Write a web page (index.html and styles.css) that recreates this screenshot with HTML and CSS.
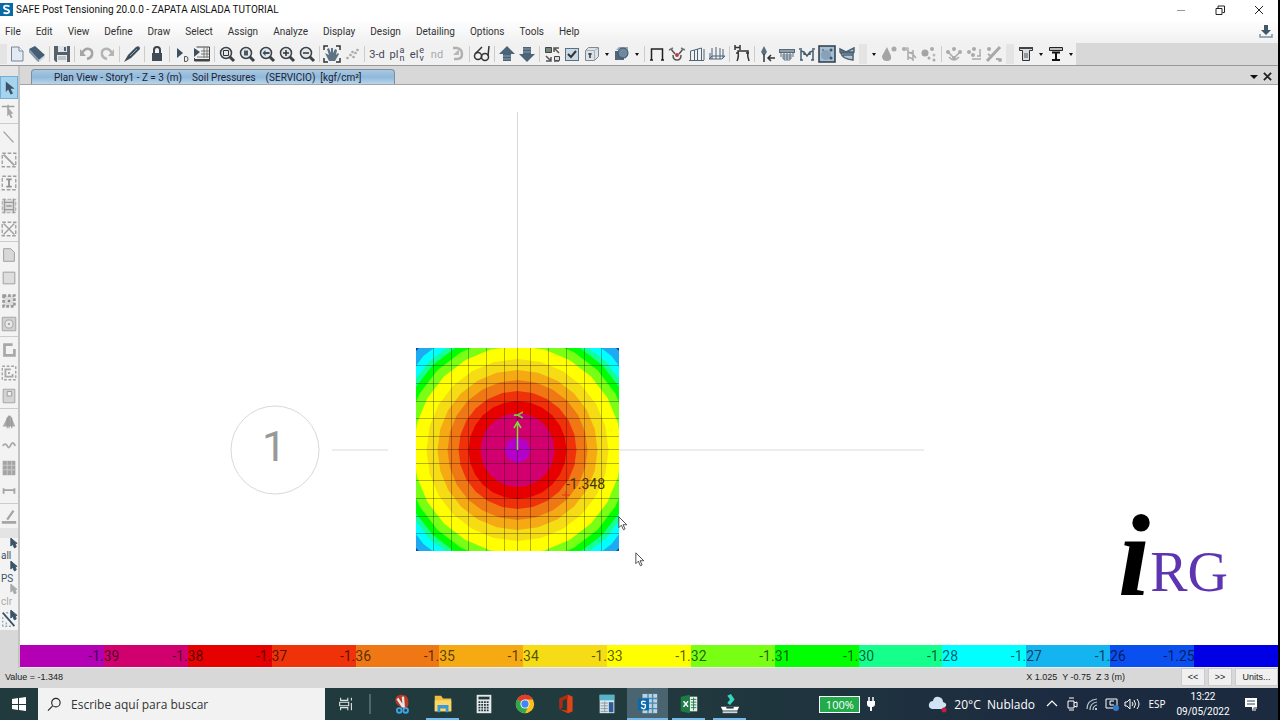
FILE: index.html
```html
<!DOCTYPE html>
<html lang="es">
<head>
    <meta charset="UTF-8">
    <meta name="viewport" content="width=device-width, initial-scale=1.0">
    <title>SAFE Post Tensioning 20.0.0 - ZAPATA AISLADA TUTORIAL</title>
    <link rel="stylesheet" href="styles.css">
</head>
<body>

    <svg class="defs" aria-hidden="true">
        <symbol id="lens" viewBox="0 0 20 20">
            <circle cx="9" cy="9" r="5.500" fill="#e4e8eb" stroke="#3a4248" stroke-width="1.500"/>
            <path d="M12.500 12.500l4.500 4.500" stroke="#3a4248" stroke-width="3"/>
        </symbol>
        <symbol id="pointer" viewBox="0 0 12 18">
            <path d="M1 1v13l3-3 2.500 5.500 2-1-2.500-5h4.500z" fill="#fff" stroke="#333" stroke-width="1"/>
        </symbol>
        <symbol id="corner-arrow" viewBox="0 0 20 20">
            <path d="M12 0v9l2-2 2 4 2-1-1-4h2z" fill="currentColor" stroke="currentColor"/>
        </symbol>
    </svg>

    <header class="titlebar">
        <svg class="app-logo" viewBox="0 0 13 13"><rect width="13" height="13" fill="#0a6aa8"/><path d="M9.500 3.500Q6.500 1.800 4.300 3.300Q3 5.500 6.500 6.300Q10.300 7.300 8.800 9.500Q6.500 11 3.500 9.500" fill="none" stroke="#fff" stroke-width="1.800"/></svg>
        <h1>SAFE Post Tensioning 20.0.0 - ZAPATA AISLADA TUTORIAL</h1>
        <div class="window-buttons">
            <button aria-label="Minimize"><svg viewBox="0 0 12 12"><path d="M2 6.500h8" stroke="#999"/></svg></button>
            <button aria-label="Restore"><svg viewBox="0 0 12 12"><path d="M2 4.500h6v6h-6zM4 4.500v-2.500h6.500v6.500h-2" fill="none" stroke="#222"/></svg></button>
            <button aria-label="Close"><svg viewBox="0 0 12 12"><path d="M2 2l8 8M10 2l-8 8" stroke="#222"/></svg></button>
        </div>
    </header>

    <nav class="menubar">
        <button>File</button>
        <button>Edit</button>
        <button>View</button>
        <button>Define</button>
        <button>Draw</button>
        <button>Select</button>
        <button>Assign</button>
        <button>Analyze</button>
        <button>Display</button>
        <button>Design</button>
        <button>Detailing</button>
        <button>Options</button>
        <button>Tools</button>
        <button>Help</button>
        <button class="download" aria-label="Download"><svg viewBox="0 0 14 16"><path d="M5 2h4v5h3l-5 5-5-5h3z" fill="#3f586b"/><path d="M1 11v3h12v-3" fill="none" stroke="#7a93a5" stroke-width="1.500"/></svg></button>
    </nav>

    <div class="toolbar">
        <div class="tools">
            <i class="grip"></i>
            <button aria-label="New"><svg viewBox="0 0 20 20"><path d="M4.500 3h7.500l4 4v10h-11.500z" fill="#e4eaf2" stroke="#76869a"/><path d="M12 3v4h4" fill="#fff" stroke="#76869a"/></svg></button>
            <button aria-label="Open"><svg viewBox="0 0 20 20"><path d="M2 5l6-3 10 9-6 5z" fill="#465e74"/><path d="M2 5l10 11v2l-2-1-8-9z" fill="#7f95a8"/><path d="M12 16l6-5v2l-6 5z" fill="#c9d3dc"/></svg></button>
            <i class="sep"></i>
            <button aria-label="Save"><svg viewBox="0 0 20 20"><path d="M2 2h16v16h-14l-2-2z" fill="#556069"/><path d="M6 2h9v6h-9z" fill="#dfe5ea"/><path d="M12 3h2v4h-2z" fill="#556069"/><path d="M5 11h10v7h-10z" fill="#e8ecf0"/><path d="M6 13h8M6 15h8" stroke="#909aa2"/></svg></button>
            <i class="sep"></i>
            <button aria-label="Undo"><svg viewBox="0 0 20 20"><path d="M5 9q3-5 7-4t3 6q-1 3-5 4" fill="none" stroke="#a4a4a4" stroke-width="2.500"/><path d="M3 5v7h6z" fill="#a4a4a4"/></svg></button>
            <button aria-label="Redo"><svg viewBox="0 0 20 20"><path d="M15 9q-3-5-7-4t-3 6q1 3 5 4" fill="none" stroke="#b4b4b4" stroke-width="2.500"/><path d="M17 5v7h-6z" fill="#b4b4b4"/></svg></button>
            <i class="sep"></i>
            <button aria-label="Edit"><svg viewBox="0 0 20 20"><path d="M2 18l4-7 8-8q4-2 4 2l-9 9z" fill="#3c4c58"/><path d="M8 12l7-7" stroke="#91a5b3"/></svg></button>
            <i class="sep"></i>
            <button aria-label="Lock"><svg viewBox="0 0 20 20"><path d="M7 9v-3q0-3 3-3t3 3v3" fill="none" stroke="#3c4348" stroke-width="2"/><rect x="5" y="9" width="10" height="8" fill="#3f4c57"/></svg></button>
            <i class="sep"></i>
            <button aria-label="Run detailing"><svg viewBox="0 0 20 20"><path d="M5 4l6 5-6 5z" fill="#3c5060"/><path d="M12.500 12.500v5h1.500q2 0 2-2.500t-2-2.500z" fill="none" stroke="#555"/></svg></button>
            <button aria-label="Run analysis"><svg viewBox="0 0 20 20"><path d="M4.500 3h13v14h-15v-3" fill="none" stroke="#444"/><path d="M9 7h8M9 10h8M5 13h12M12 3v11M15 3v11" stroke="#777"/><path d="M2 4l6 4-6 5z" fill="#3c5060"/><path d="M3 15h14v2h-14z" fill="#444"/></svg></button>
            <i class="sep"></i>
            <button aria-label="Zoom window"><svg viewBox="0 0 20 20"><use href="#lens"/><path d="M6.500 6.500h5v5h-5z" fill="none" stroke="#333"/></svg></button>
            <button aria-label="Zoom full"><svg viewBox="0 0 20 20"><use href="#lens"/><path d="M7 6.500h4v5h-4z" fill="#4a5862"/></svg></button>
            <button aria-label="Zoom previous"><svg viewBox="0 0 20 20"><use href="#lens"/><path d="M5.500 9l3-3v2h4v2h-4v2z" fill="#3a5060"/></svg></button>
            <button aria-label="Zoom in"><svg viewBox="0 0 20 20"><use href="#lens"/><path d="M6 9h6M9 6v6" stroke="#333" stroke-width="1.500"/></svg></button>
            <button aria-label="Zoom out"><svg viewBox="0 0 20 20"><use href="#lens"/><path d="M6 9h6" stroke="#333" stroke-width="1.500"/></svg></button>
            <i class="sep"></i>
            <button aria-label="Pan"><svg viewBox="0 0 20 20"><path d="M2 6v-4h4M14 2h4v4M18 14v4h-4M6 18h-4v-4" fill="none" stroke="#333" stroke-width="1.500"/><path d="M3 9l4 2-2-6 2-1 2 5 0-5h2l0 5 2-4 2 1-1 5 2-2 1 1-4 7h-6z" fill="#5d7384"/></svg></button>
            <button aria-label="Walk"><svg viewBox="0 0 20 20"><path d="M5 15l1-2M8 12l1-2M11 14l1-2M13 10l1-2M15 7l1-2M10 9l1-2" stroke="#aaa" stroke-width="2.500"/></svg></button>
            <i class="sep"></i>
            <button class="word">3-d</button>
            <button class="word stacked">pl<span>a<br>n</span></button>
            <button class="word stacked">el<span>e<br>v</span></button>
            <button class="word off">nd</button>
            <button aria-label="Rotate"><svg viewBox="0 0 20 20"><path d="M6 4h4q5 1 5 6t-5 5h-3" fill="none" stroke="#b0b0b0" stroke-width="2.500"/><path d="M12 5v6h-6z" fill="#b8b8b8"/></svg></button>
            <i class="sep"></i>
            <button aria-label="Object visibility"><svg viewBox="0 0 20 20"><circle cx="6" cy="12" r="3.500" fill="none" stroke="#333" stroke-width="1.500"/><circle cx="13" cy="13" r="3.500" fill="none" stroke="#333" stroke-width="1.500"/><path d="M3 10l7-7M16 12l1-10M9 12h1" fill="none" stroke="#333" stroke-width="1.500"/></svg></button>
            <i class="sep"></i>
            <button aria-label="Story up"><svg viewBox="0 0 20 20"><path d="M10 2l8 8h-4v7h-8v-7h-4z" fill="#4c6478"/><path d="M6 12h8M6 15h8" stroke="#8aa0b2"/></svg></button>
            <button aria-label="Story down"><svg viewBox="0 0 20 20"><path d="M10 18l8-8h-4v-7h-8v7h-4z" fill="#4c6478"/><path d="M6 5h8M6 8h8" stroke="#8aa0b2"/></svg></button>
            <i class="sep"></i>
            <button aria-label="Shrink objects"><svg viewBox="0 0 20 20"><path d="M3.500 3.500h6v5h-6z" fill="#708878" stroke="#444"/><path d="M12.500 12.500h5v4h-5z" fill="#ddd" stroke="#444"/><path d="M17 9l-4-4M12 8v-4h5M4 12l4 4M9 13v4h-5M12 17h5" fill="none" stroke="#555" stroke-width="1.500"/></svg></button>
            <button aria-label="Display options"><svg viewBox="0 0 20 20"><rect x="3.500" y="4.500" width="13" height="12" fill="#c8d8e4" stroke="#5a7080"/><path d="M6 10l3 3 5-6" fill="none" stroke="#333" stroke-width="2"/></svg></button>
            <button aria-label="Assignments"><svg viewBox="0 0 20 20"><path d="M3.500 6.500l3-3h10v9l-4 4h-9z" fill="#dce3e8" stroke="#7c8a94"/><path d="M3.500 6.500h9v10M12.500 6.500l4-3" fill="none" stroke="#a4b0b8"/><path d="M8 9v5" stroke="#333" stroke-width="1.500"/><path d="M6 10h4" stroke="#333"/></svg></button>
            <button class="caret" aria-label="More assignments"></button>
            <button aria-label="Extrude"><svg viewBox="0 0 20 20"><path d="M3 7h9v9h-9z" fill="#50687c"/><path d="M7 3h9v9l-3 3v-9h-9z" fill="#90a5b8"/><circle cx="11" cy="9" r="5" fill="#6f889e" stroke="#405468"/></svg></button>
            <button class="caret" aria-label="More extrusions"></button>
            <i class="sep"></i>
            <button aria-label="Undeformed shape"><svg viewBox="0 0 20 20"><path d="M3 16h3M4.500 16v-11h11v11M14 16h3" fill="none" stroke="#222" stroke-width="1.500"/></svg></button>
            <button aria-label="Loads"><svg viewBox="0 0 20 20"><path d="M4 5l4 5M16 5l-4 5M6 11q0 5 4 5t4-5" fill="none" stroke="#555" stroke-width="1.500"/><path d="M2 6l4-2M18 6l-4-2" stroke="#777" stroke-width="1.500"/><circle cx="10" cy="11" r="2" fill="#c23a4a"/></svg></button>
            <button aria-label="Frame loads"><svg viewBox="0 0 20 20"><path d="M3.500 16v-9l4-1v10M7.500 6l7-2v12M10.500 5v11M2 16.500h15M17 16v-11" fill="none" stroke="#4e6678"/></svg></button>
            <button aria-label="Area loads"><svg viewBox="0 0 20 20"><path d="M5 4v11M9 3v12M13 4v11M3 9v6M16 5v9M2 15h13l3-3h-13z" fill="none" stroke="#4b6376"/></svg></button>
            <i class="sep"></i>
            <button aria-label="Deformed shape"><svg viewBox="0 0 20 20"><path d="M3 1v5M8 1v5M3 3.500h5M5 17q2-4 1-10h10q-1 5 1 10M4 9h3M14 9h3" fill="none" stroke="#333" stroke-width="1.500"/></svg></button>
            <i class="sep"></i>
            <button aria-label="Reactions"><svg viewBox="0 0 20 20"><path d="M7 2l3 6-2 3h-2l-2-3z" fill="#5a7080"/><path d="M7 10v8M11 14h7M14 11l-3 3 3 3" fill="none" stroke="#333" stroke-width="1.500"/></svg></button>
            <button aria-label="Slab forces"><svg viewBox="0 0 20 20"><path d="M2 5h16v4h-16z" fill="#566a78"/><path d="M5 10h10v5h-2v2h-6v-2h-2z" fill="#a9b8c4"/><path d="M4 9v4M7 9v7M10 9v7M13 9v7M16 9v4" stroke="#566a78"/><path d="M3 7h14" stroke="#c6d0d8"/></svg></button>
            <button aria-label="Beam forces"><svg viewBox="0 0 20 20"><path d="M4 16v-10M16 16v-10M4 7l3 1 3 4 3-4 3-1M2 5h3M15 5h3M3 16h3M14 16h3M7 8v3M13 8v3" fill="none" stroke="#465f70" stroke-width="1.500"/></svg></button>
            <button class="pressed" aria-label="Soil pressures"><svg viewBox="0 0 20 20"><rect x="2" y="2" width="16" height="16" fill="#a3bdd2" stroke="#2d3d4a" stroke-width="1.500"/><circle cx="9" cy="11" r="5" fill="#87a2b8"/><circle cx="14" cy="6" r="1.500" fill="#456"/><circle cx="6" cy="6" r="1" fill="#678"/><circle cx="14" cy="14" r="1.500" fill="#456"/></svg></button>
            <button aria-label="Strip forces"><svg viewBox="0 0 20 20"><path d="M3 5l6 3 8-4v4h-14zM3 9h14M4 9q1 6 12 7v-7M6 11h10" fill="#b8c6d0" stroke="#4b6374" stroke-width="1.500"/></svg></button>
            <i class="grip light"></i>
            <button class="caret" aria-label="More results"></button>
            <button aria-label="Load case"><svg viewBox="0 0 20 20"><path d="M8 3l4 9q1 5-4 5t-5-5z" fill="#a4a4a4"/><circle cx="15" cy="5" r="2.500" fill="#aaa"/></svg></button>
            <button aria-label="Tendon points"><svg viewBox="0 0 20 20"><path d="M9 6v10M14 6v11M9 8l5 2M9 13l5 2M12 8l5 6" stroke="#aaa" stroke-width="1.500"/><circle cx="5" cy="5" r="2" fill="#aaa"/><circle cx="8" cy="5" r="2" fill="#bbb"/></svg></button>
            <button aria-label="Joints"><svg viewBox="0 0 20 20"><circle cx="6" cy="9" r="3.500" fill="#a4a4a4"/><circle cx="13" cy="5" r="2" fill="#aaa"/><circle cx="10" cy="14" r="1.500" fill="#aaa"/><circle cx="15" cy="16" r="1.500" fill="#aaa"/><circle cx="15" cy="11" r="1.500" fill="#bbb"/></svg></button>
            <i class="sep"></i>
            <button aria-label="Links"><svg viewBox="0 0 20 20"><path d="M4 8l6 6 6-6M5 13q5 6 10 0" fill="none" stroke="#aaa" stroke-width="1.500"/><circle cx="10" cy="5" r="2" fill="#aaa"/><circle cx="4" cy="8" r="2" fill="#aaa"/><circle cx="16" cy="8" r="2" fill="#aaa"/><circle cx="10" cy="14" r="2" fill="#aaa"/></svg></button>
            <button aria-label="Supports"><svg viewBox="0 0 20 20"><path d="M8 15h9M16 5v7M13 12h4" stroke="#aaa" stroke-width="1.500"/><circle cx="5" cy="8" r="2" fill="#aaa"/><circle cx="10" cy="5" r="2" fill="#aaa"/><circle cx="9" cy="11" r="2" fill="#aaa"/></svg></button>
            <button aria-label="Cut"><svg viewBox="0 0 20 20"><path d="M3 17l13-14" stroke="#a8a8a8" stroke-width="3"/><path d="M4 10l3 2M12 15h3" stroke="#aaa" stroke-width="2"/><circle cx="5" cy="5" r="2" fill="#aaa"/><circle cx="16" cy="16" r="2" fill="#aaa"/></svg></button>
            <i class="grip light"></i>
            <button aria-label="Concrete design"><svg viewBox="0 0 20 20"><path d="M3.500 3.500h13v3h-3v10h-7v-10h-3z" fill="#d6dde2" stroke="#333"/><path d="M3 4h14" stroke="#444" stroke-width="2"/><path d="M9 9v5M11 9v5" stroke="#555"/></svg></button>
            <button class="caret" aria-label="More concrete design"></button>
            <button aria-label="Steel design"><svg viewBox="0 0 20 20"><path d="M3.500 3.500h13v3h-13z" fill="#bbb" stroke="#222"/><path d="M6 8.500h8M10 8v8M6 16h8" stroke="#111" stroke-width="2"/></svg></button>
            <button class="caret" aria-label="More steel design"></button>
        </div>
    </div>

    <div class="workspace">
        <aside class="side-tools">
            <i class="grip-line"></i>
            <button class="active" aria-label="Select"><svg viewBox="0 0 20 20"><path d="M6 2v13l3-3 3 6 3-1-3-6h5z" fill="#3a5368"/></svg></button>
            <button aria-label="Reshape"><svg viewBox="0 0 20 20"><path d="M2 5h14M9 3v5" stroke="#a0a0a0" stroke-width="1.500"/><path d="M8 5v11l2-2 2 4 2-1-2-4h3z" fill="#a8a8a8"/></svg></button>
            <i class="line"></i>
            <button aria-label="Draw line"><svg viewBox="0 0 20 20"><path d="M4 4l11 12" stroke="#a0a0a0" stroke-width="1.500"/></svg></button>
            <button aria-label="Quick line"><svg viewBox="0 0 20 20"><path d="M2.500 2.500h15v15h-15z" fill="none" stroke="#a0a0a0" stroke-width="1.500" stroke-dasharray="4 2"/><path d="M4 4l12 12" stroke="#a0a0a0" stroke-width="2"/></svg></button>
            <button aria-label="Quick column"><svg viewBox="0 0 20 20"><path d="M2.500 2.500h15v15h-15z" fill="none" stroke="#a0a0a0" stroke-width="1.500" stroke-dasharray="4 2"/><path d="M7 6h6M10 6v8M7 14h6" stroke="#909090" stroke-width="2"/></svg></button>
            <button aria-label="Secondary beams"><svg viewBox="0 0 20 20"><path d="M2.500 2.500h15v15h-15z" fill="#ddd" stroke="#a0a0a0" stroke-dasharray="4 2"/><path d="M5 2v16M15 2v16M5 6h10M5 14h10M7 10h6" fill="none" stroke="#999" stroke-width="1.500"/></svg></button>
            <button aria-label="Braces"><svg viewBox="0 0 20 20"><path d="M2.500 2.500h15v15h-15z" fill="none" stroke="#a0a0a0" stroke-width="1.500" stroke-dasharray="4 2"/><path d="M4 4l12 12M16 4l-12 12" stroke="#a0a0a0" stroke-width="1.500"/></svg></button>
            <i class="line"></i>
            <button aria-label="Draw slab"><svg viewBox="0 0 20 20"><path d="M4 3h8l4 4v10h-12z" fill="#d8d8d8" stroke="#999"/></svg></button>
            <button aria-label="Rectangular slab"><svg viewBox="0 0 20 20"><path d="M3.500 3.500h13v13h-13z" fill="#dedede" stroke="#999"/></svg></button>
            <button aria-label="Quick slab"><svg viewBox="0 0 20 20"><path d="M4 4h12v12h-12z" fill="#ddd" stroke="#999" stroke-width="3" stroke-dasharray="3 2"/><circle cx="10" cy="10" r="1.500" fill="#888"/></svg></button>
            <button aria-label="Slab opening"><svg viewBox="0 0 20 20"><path d="M2.500 2.500h15v15h-15z" fill="#d0d0d0" stroke="#a0a0a0"/><circle cx="10" cy="10" r="4.500" fill="#e8e8e8" stroke="#a0a0a0"/><circle cx="10" cy="10" r="1" fill="#888"/></svg></button>
            <i class="line"></i>
            <button aria-label="Draw wall"><svg viewBox="0 0 20 20"><path d="M14 4h-9v12h11v-7" fill="none" stroke="#a8a8a8" stroke-width="3"/></svg></button>
            <button aria-label="Quick wall"><svg viewBox="0 0 20 20"><path d="M2.500 2.500h15v15h-15z" fill="none" stroke="#a0a0a0" stroke-width="1.500" stroke-dasharray="3 2"/><path d="M12 6h-6v8h8v-3" fill="none" stroke="#a8a8a8" stroke-width="2"/><circle cx="10" cy="10" r="1" fill="#888"/></svg></button>
            <button aria-label="Wall opening"><svg viewBox="0 0 20 20"><path d="M3.500 2.500h13v15h-13z" fill="#d4d4d4" stroke="#a0a0a0"/><path d="M8 5h5v5h-5z" fill="#eee" stroke="#999"/></svg></button>
            <i class="line"></i>
            <button aria-label="Load"><svg viewBox="0 0 20 20"><path d="M9 3h3l5 12h-14z" fill="#aaa"/><path d="M8 5v12M13 5v12M10 3v14" stroke="#8e8e8e"/></svg></button>
            <button aria-label="Tendon"><svg viewBox="0 0 20 20"><path d="M3 11q3-4 5 0t4-1 5 1" fill="none" stroke="#a8a8a8" stroke-width="2"/></svg></button>
            <button aria-label="Grid"><svg viewBox="0 0 20 20"><rect x="3" y="2" width="14" height="16" fill="#a4a4a4"/><path d="M8 2v16M13 2v16M3 7h14M3 12h14" stroke="#ccc"/></svg></button>
            <button aria-label="Dimension"><svg viewBox="0 0 20 20"><path d="M3 9h14M4 7v6M16 7v6" stroke="#a4a4a4" stroke-width="2"/></svg></button>
            <i class="line"></i>
            <button aria-label="Design strip"><svg viewBox="0 0 20 20"><path d="M8 13l7-10" stroke="#a4a4a4" stroke-width="2.500"/><path d="M2 16h16" stroke="#a4a4a4" stroke-width="3"/></svg></button>
            <i class="grip-line"></i>
            <button class="word">all<svg viewBox="0 0 20 20"><use href="#corner-arrow"/></svg></button>
            <button class="word">PS<svg viewBox="0 0 20 20"><use href="#corner-arrow"/></svg></button>
            <button class="word off">clr<svg viewBox="0 0 20 20"><use href="#corner-arrow"/></svg></button>
            <button class="by-line" aria-label="Select by line"><svg viewBox="0 0 20 20"><path d="M3 3l13 15" stroke="#3a5368" stroke-width="2"/><path d="M3 8v10M7 14v4M12 18h-9M7 3h5" fill="none" stroke="#8aa4b6" stroke-width="1.500" stroke-dasharray="2 2"/><use href="#corner-arrow"/></svg></button>
        </aside>

        <main class="view">
            <div class="tabs">
                <button class="tab"><span>Plan View - Story1 - Z = 3 (m)</span><span>Soil Pressures</span><span>(SERVICIO)&nbsp; [kgf/cm²]</span></button>
                <div class="tab-controls">
                    <button class="caret" aria-label="Tab list"></button>
                    <button aria-label="Close tab"><svg viewBox="0 0 10 10"><path d="M1 1l8 8M9 1l-8 8" stroke="#222" stroke-width="2"/></svg></button>
                </div>
            </div>

            <div class="canvas">
                <!-- plan view, in window units -->
                <svg class="plan" viewBox="20 85 1258 560" preserveAspectRatio="xMinYMin meet">
                    <g stroke="#d9d9d9" fill="none">
                        <path d="M517.500 112v236M332 450h56M619 450h305"/>
                        <circle cx="275" cy="450" r="44"/>
                    </g>
                    <text class="axis" x="274" y="461">1</text>

                    <clipPath id="slab"><rect x="416" y="348" width="203" height="203"/></clipPath>
                    <g id="contours" clip-path="url(#slab)">
                        <rect x="416" y="348" width="203" height="203" fill="#1eaaf0"/>
                    </g>
                    <path d="M416 348h3l-3 3zM619 348h-3l3 3zM416 551v-3l3 3zM619 551v-3l-3 3z" fill="#1440b4"/>
                    <path class="mesh" d="M433.500 348v203M451.500 348v203M468.500 348v203M486.500 348v203M504.500 348v203M517.500 348v203M530.500 348v203M548.500 348v203M566.500 348v203M584.500 348v203M601.500 348v203M416 365.500h203M416 383.500h203M416 401.500h203M416 418.500h203M416 436.500h203M416 449.500h203M416 463.500h203M416 480.500h203M416 498.500h203M416 516.500h203M416 533.500h203"/>
                    <path d="M517.500 450v-27M514 428l3.500-6 3.500 6" fill="none" stroke="#7bdc3c" stroke-width="1.500"/>
                    <text class="y-axis" transform="translate(514 415) rotate(90)">Y</text>
                    <path d="M562 495h8M566 491v7" stroke="#e6321e"/>
                    <text class="value" x="566" y="489">-1.348</text>
                    <use href="#pointer" x="618" y="516" width="10" height="15"/>
                    <use href="#pointer" x="635" y="552" width="10" height="15"/>
                </svg>
                <div class="brand"><span class="brand-i">i</span><span class="brand-rg">RG</span></div>
            </div>

            <div class="legend">
                <span>-1.39</span>
                <span>-1.38</span>
                <span>-1.37</span>
                <span>-1.36</span>
                <span>-1.35</span>
                <span>-1.34</span>
                <span>-1.33</span>
                <span>-1.32</span>
                <span>-1.31</span>
                <span>-1.30</span>
                <span>-1.28</span>
                <span>-1.27</span>
                <span>-1.26</span>
                <span>-1.25</span>
            </div>
        </main>
    </div>

    <footer class="statusbar">
        <span>Value = -1.348</span>
        <span class="coords">X 1.025&nbsp; Y -0.75&nbsp; Z 3 (m)</span>
        <button>&lt;&lt;</button>
        <button>&gt;&gt;</button>
        <button class="units">Units...</button>
    </footer>

    <div class="taskbar">
        <button class="start" aria-label="Start"><svg viewBox="0 0 14 14"><path d="M0 2l6-1v6h-6zM7 1l7-1v7h-7zM0 8h6v5l-6-1zM7 8h7v6l-7-1z" fill="#fff"/></svg></button>
        <label class="search">
            <svg viewBox="0 0 16 16"><circle cx="9.500" cy="6" r="4.500" fill="none" stroke="#222" stroke-width="1.200"/><path d="M6 9.500l-5 5" stroke="#222" stroke-width="1.200"/></svg>
            <input type="text" placeholder="Escribe aquí para buscar" aria-label="Buscar">
        </label>
        <div class="apps">
            <button class="task-view" aria-label="Task view"><svg viewBox="0 0 20 20"><path d="M4 3v3h8v-3M4 17v-3h8v3M3 8h10v4h-10zM16 3v3M16 9v8" fill="none" stroke="#dfe6e8" stroke-width="1.200"/></svg></button>
            <i class="divider"></i>
            <button aria-label="Snip"><svg viewBox="0 0 24 24"><path d="M10 2q9-1 9 8 0 8-5 8l-8-6q-4-8 4-10z" fill="#b93a24"/><path d="M13 4l1 12M7 6l6 9" stroke="#e6e9ec" stroke-width="2.500"/><circle cx="9" cy="19" r="2.500" fill="none" stroke="#3ba6e8" stroke-width="2"/><circle cx="16" cy="19" r="2.500" fill="none" stroke="#3ba6e8" stroke-width="2"/></svg></button>
            <button class="open" aria-label="Explorer"><svg viewBox="0 0 24 24"><path d="M3 3h7l2 3h9v14h-18z" fill="#f0bd3c"/><path d="M3 8h18v12h-18z" fill="#fbd968"/><path d="M6 21v-8h12v8h-3v-4h-6v4z" fill="#3d98d8"/></svg></button>
            <button aria-label="Calculator"><svg viewBox="0 0 24 24"><rect x="4" y="2" width="16" height="20" fill="#e6e9ea"/><path d="M6 4h12v3h-12z" fill="#213a3e"/><path d="M6 10h12M6 13h12M6 16h12M6 19h12" stroke="#213a3e" stroke-width="2" stroke-dasharray="2 1"/></svg></button>
            <button aria-label="Chrome"><svg viewBox="0 0 24 24"><circle cx="12" cy="12" r="10" fill="#fbc116"/><path d="M12 12L3.300 7A10 10 0 0 1 20.700 7H12z" fill="#e33b2e"/><path d="M12 12L3.300 7A10 10 0 0 0 12 22L16 14z" fill="#2da94f"/><circle cx="12" cy="12" r="5" fill="#fff"/><circle cx="12" cy="12" r="4" fill="#4285f4"/></svg></button>
            <button aria-label="Office"><svg viewBox="0 0 24 24"><path d="M5 6l9-4 5 2v16l-5 2-9-4 8 1v-13l-5 2v7l-3 2z" fill="#d83b01"/><path d="M14 2l5 2v16l-5 2z" fill="#e0441c"/><path d="M5 6l9-4v4l-6 2v8l-3 2z" fill="#b02a12"/></svg></button>
            <button aria-label="Calculator plus"><svg viewBox="0 0 24 24"><rect x="4" y="2" width="16" height="20" fill="#dbe6ec"/><rect x="4" y="2" width="16" height="6" fill="#52b5cc"/><path d="M5 11h8M5 14h8M5 17h8M5 20h8M9.500 9v12" stroke="#8796a2"/><path d="M14 10h5v11h-5z" fill="#2b5e96"/></svg></button>
            <button class="open current" aria-label="SAFE"><svg viewBox="0 0 24 24"><rect x="6" y="1" width="16" height="21" fill="#b9d4e4"/><path d="M6 6h16M6 11h16M6 17h16M12 1v21M17 1v21" stroke="#4d88aa" stroke-width="1.500"/><rect x="1" y="6" width="12" height="13" fill="#0a6aae"/><path d="M9.500 9.500q-4.500-1.500-4.500 1t2.500 2 1.500 3-4.500 0" fill="none" stroke="#fff" stroke-width="1.500"/></svg></button>
            <button class="open" aria-label="Excel"><svg viewBox="0 0 24 24"><path d="M3 4l10-2v20l-10-2z" fill="#1e7b45"/><path d="M13 4h8v16h-8z" fill="#e8f1ec"/><path d="M14 7h6M14 10h6M14 13h6M14 16h6M17 5v14" stroke="#1e7b45"/><path d="M6 9l5 6M11 9l-5 6" stroke="#fff" stroke-width="1.500"/></svg></button>
            <button class="open" aria-label="Filmora"><svg viewBox="0 0 24 24"><path d="M9 3l4-2 4 6-5 6-3-2 3-4z" fill="#35d6be"/><path d="M2 15h20l-2 4h-16z" fill="#fff"/><path d="M8 15h8v2h-8z" fill="#213a3e"/><path d="M4 20h16v2h-16z" fill="#d0d8da"/></svg></button>
        </div>
        <div class="tray">
            <span class="battery">100%</span>
            <svg class="plug" viewBox="0 0 10 16"><path d="M3 1v4M7 1v4" stroke="#fff" stroke-width="1.500"/><path d="M1 5h8v3q0 3-3 3v4h-2v-4q-3 0-3-3z" fill="#fff"/></svg>
            <button class="weather"><svg viewBox="0 0 20 20"><path d="M4 15q-4-1-3-5 1-3 4-3 1-5 6-4 4 1 4 5 4 1 3 4l-3 3z" fill="#cfe3f5"/><circle cx="16" cy="16" r="2.500" fill="#c41e3a"/></svg><span>20°C&nbsp; Nublado</span></button>
            <button class="icon" aria-label="Hidden icons"><svg viewBox="0 0 16 16"><path d="M3 10l5-5 5 5" fill="none" stroke="#fff" stroke-width="1.200"/></svg></button>
            <button class="icon" aria-label="Meet now"><svg viewBox="0 0 16 16"><path d="M4 5h6v7h-6zM10 7l3-1v5l-3-1M5 2h5M5 14h5" fill="none" stroke="#fff"/></svg></button>
            <button class="icon" aria-label="Network"><svg viewBox="0 0 16 16"><path d="M3 13q0-9 10-10M6 14q0-7 7-8M9 14q0-4 4-5" fill="none" stroke="#b9c1c8" stroke-width="1.200"/><circle cx="12" cy="13" r="1" fill="#fff"/></svg></button>
            <button class="icon" aria-label="Sync"><svg viewBox="0 0 16 16"><path d="M2 3h11v9h-11z" fill="none" stroke="#fff"/><path d="M10 5h-4v4h4" fill="none" stroke="#fff"/><circle cx="12" cy="12" r="3" fill="#2f7cc4"/></svg></button>
            <button class="icon" aria-label="Volume"><svg viewBox="0 0 16 16"><path d="M1 6h2l3-3v10l-3-3h-2zM8 6q2 2 0 4M10 4q3 4 0 8M13 3q4 5 0 10" fill="none" stroke="#fff"/></svg></button>
            <button class="lang">ESP</button>
            <button class="clock">13:22<br>09/05/2022</button>
            <button class="notes" aria-label="Notifications"><svg viewBox="0 0 16 16"><path d="M2 2h12v9h-3l-2 3v-3h-7z" fill="#fff"/><path d="M4 5h8M4 8h8" stroke="#345"/><path d="M9 12h5M9 14h4" stroke="#fff"/></svg></button>
        </div>
    </div>

    <script>
        // contour bands of the soil pressure, outermost first: [radius, colour]
        const bands = [
            [133, "#00ffff"],
            [125, "#14ff96"],
            [120, "#00ff00"],
            [113, "#78ff14"],
            [104, "#ffff00"],
            [91, "#f5dc14"],
            [80, "#f5aa14"],
            [70, "#f07814"],
            [59, "#f0320a"],
            [49, "#e60000"],
            [37, "#d2006e"],
            [13, "#b400c8"]
        ];
        const contours = document.getElementById("contours");

        bands.forEach(band => {
            const sides = band[0] < 20 ? 8 : 24;
            let points = "";
            for (let i = 0; i < sides; i++) {
                const angle = i * 2 * Math.PI / sides;
                points += (517.5 + band[0] * Math.cos(angle)) + "," + (450 + band[0] * Math.sin(angle)) + " ";
            }
            const ring = document.createElementNS("http://www.w3.org/2000/svg", "polygon");
            ring.setAttribute("points", points);
            ring.setAttribute("fill", band[1]);
            contours.appendChild(ring);
        });
    </script>
</body>
</html>
```
FILE: styles.css
```css
* {
    margin: 0;
    padding: 0;
    box-sizing: border-box;
}
body {
    min-height: 100vh;
    display: flex;
    flex-direction: column;
    background-color: #d8d8d8;
    border-right: 2px solid #000;
    font-family: Roboto, "Open Sans", sans-serif;
    font-size: 10px;
    color: #333;
}
button, input {
    border: none;
    background: none;
    font: inherit;
    color: inherit;
}
svg {
    display: block;
}
.defs {
    position: absolute;
    width: 0;
    height: 0;
}

/* title + menu */
.titlebar {
    height: 19px;
    background-color: #fff;
    display: flex;
    align-items: center;
}
.app-logo {
    width: 13px;
    height: 13px;
    margin-right: 3px;
}
.titlebar h1 {
    flex: 1;
    font-size: 10px;
    font-weight: normal;
    color: #111;
}
.window-buttons {
    display: flex;
}
.window-buttons button {
    width: 39px;
    display: flex;
    justify-content: center;
}
.window-buttons svg {
    width: 12px;
    height: 12px;
}
.menubar {
    height: 24px;
    padding: 0 5px;
    display: flex;
    align-items: center;
    gap: 15px;
    background: linear-gradient(#fff, #f1f1f1);
}
.download {
    margin-left: auto;
}
.download svg {
    width: 14px;
    height: 16px;
}

/* toolbar */
.toolbar {
    height: 23px;
    border-bottom: 1px solid #999;
    display: flex;
}
.tools {
    display: flex;
    align-items: center;
    background-color: #f1f1f1;
}
.tools button {
    width: 20px;
    height: 20px;
}
.tools svg {
    width: 20px;
    height: 20px;
}
.sep {
    flex: 0 0 1px;
    height: 16px;
    margin: 0 2px;
    background-color: #ccc;
}
.grip {
    width: 7px;
    height: 20px;
    background-color: #e4e4e4;
}
.grip.light {
    width: 8px;
    margin: 0 2px;
}
.tools .word {
    font-size: 11px;
    color: #445;
}
.tools .stacked {
    display: flex;
    align-items: center;
    justify-content: center;
    gap: 1px;
}
.stacked span {
    font-size: 9px;
    line-height: 8px;
}
.tools .off {
    color: #aaa;
}
.tools .caret {
    width: 10px;
}
.caret::before {
    content: "";
    display: block;
    width: 0;
    margin: 0 auto;
    border: 2px solid transparent;
    border-top: 3px solid #111;
    border-bottom: none;
}

/* side toolbar */
.workspace {
    flex: 1;
    display: flex;
}
.side-tools {
    flex: 0 0 20px;
    border-right: 2px solid #c4c4c4;
    display: flex;
    flex-direction: column;
    align-items: center;
}
.side-tools > * {
    flex-shrink: 0;
    width: 18px;
    background-color: #f3f3f3;
}
.side-tools button {
    height: 23px;
    display: flex;
    align-items: center;
    justify-content: center;
}
.side-tools svg {
    width: 18px;
    height: 18px;
}
.side-tools .active {
    background-color: #a6d3ee;
    border: 1px solid #6fb0d8;
}
.side-tools .line {
    height: 3px;
    border-top: 1px solid #f3f3f3;
    border-bottom: 1px solid #f3f3f3;
    background-color: #ccc;
}
.side-tools .grip-line {
    height: 10px;
    background-color: #e4e4e4;
}
.side-tools .word {
    position: relative;
    align-items: flex-end;
    justify-content: flex-start;
    padding-left: 1px;
    font-size: 10px;
    color: #3a5368;
}
.side-tools .word svg {
    position: absolute;
    top: 0;
    right: 0;
}
.side-tools .by-line {
    color: #3a5368;
}
.side-tools .off {
    color: #aaa;
}

/* tabs */
.view {
    flex: 1;
    min-width: 0;
    display: flex;
    flex-direction: column;
}
.tabs {
    height: 19px;
    padding: 3px 6px 0 11px;
    display: flex;
    justify-content: space-between;
    border-bottom: 1px solid #a5a5a5;
}
.tab {
    padding: 0 32px 0 22px;
    display: flex;
    align-items: center;
    gap: 10px;
    background: linear-gradient(#a9c8e2, #8fb9da 50%, #b9d5ea);
    border: 1px solid #7c8e9c;
    border-bottom: none;
    border-radius: 4px 4px 0 0;
    color: #223;
}
.tab-controls {
    display: flex;
    align-items: center;
    gap: 5px;
}
.tab-controls .caret::before {
    border-width: 4px 4px 0;
}
.tab-controls svg {
    width: 9px;
    height: 9px;
}

/* plan view */
.canvas {
    flex: 1;
    position: relative;
    background-color: #fff;
}
.plan {
    width: 100%;
}
.axis {
    font: 43px Roboto, sans-serif;
    fill: #999;
    text-anchor: middle;
}
.mesh {
    fill: none;
    stroke: #000;
    stroke-opacity: 0.3;
}
.y-axis {
    font: bold 12px "Liberation Sans", sans-serif;
    fill: #7bc83c;
    text-anchor: middle;
}
.value {
    font: 14px Roboto, sans-serif;
    fill: #4a3208;
}
.brand {
    position: absolute;
    right: 50px;
    bottom: 43px;
    display: flex;
    align-items: flex-end;
    font-family: "Liberation Serif", serif;
    line-height: 60px;
}
.brand-i {
    margin-bottom: 16px;
    font-size: 116px;
    font-weight: bold;
    font-style: italic;
    color: #000;
}
.brand-rg {
    font-size: 56px;
    color: #5e35b1;
}

/* colour scale */
.legend {
    height: 23px;
    display: grid;
    grid-template-columns: repeat(30, 1fr);
    align-items: center;
    text-align: center;
    font-size: 14px;
    color: rgba(0, 0, 0, 0.65);
    border-bottom: 1px solid #eee;
    background: linear-gradient(to right,
        #b400b4 6.67%, #d2006e 6.67% 13.33%, #e60000 13.33% 20%,
        #f0320a 20% 26.67%, #f07814 26.67% 33.33%, #f5aa14 33.33% 40%,
        #f5dc14 40% 46.67%, #ffff00 46.67% 53.33%, #78ff14 53.33% 60%,
        #00ff00 60% 66.67%, #14ff8c 66.67% 73.33%, #00ffff 73.33% 80%,
        #14b4f0 80% 86.67%, #0a50f0 86.67% 93.33%, #0000e6 93.33%);
}
.legend span {
    grid-column: span 2;
}
.legend span:first-child {
    grid-column: 2 / span 2;
}
.legend span:last-child {
    padding-right: 30px;
}

/* status bar */
.statusbar {
    height: 20px;
    padding: 0 0 2px 5px;
    display: flex;
    align-items: center;
    font-family: "Liberation Sans", sans-serif;
    font-size: 9px;
    color: #222;
}
.coords {
    margin-left: auto;
    margin-right: 56px;
}
.statusbar button {
    width: 24px;
    height: 18px;
    margin-right: 3px;
    background-color: #f0f0f0;
    border: 1px solid #ccc;
}
.statusbar .units {
    width: 43px;
    margin-right: 0;
}

/* taskbar */
.taskbar {
    height: 32px;
    display: flex;
    background: linear-gradient(to right, #213a3e 50%, #1c2a40 85%);
    color: #fff;
    font-family: "Open Sans", sans-serif;
    font-size: 11px;
}
.taskbar button {
    display: flex;
    align-items: center;
    justify-content: center;
}
.start {
    width: 38px;
}
.start svg {
    width: 14px;
    height: 14px;
}
.search {
    width: 287px;
    padding-left: 9px;
    display: flex;
    align-items: center;
    gap: 9px;
    background-color: #f2f2f2;
}
.search svg {
    width: 15px;
    height: 15px;
}
.search input {
    flex: 1;
    min-width: 0;
    font-size: 12px;
}
.search input::placeholder {
    color: #333;
    opacity: 1;
}
.apps {
    display: flex;
    align-items: center;
}
.apps button {
    position: relative;
    width: 41px;
    height: 32px;
}
.apps svg {
    width: 22px;
    height: 22px;
}
.apps .task-view svg {
    width: 18px;
    height: 18px;
}
.divider {
    width: 2px;
    height: 20px;
    margin: 0 10px 0 3px;
    background-color: #50666a;
}
.apps .open::after {
    content: "";
    position: absolute;
    left: 4px;
    right: 4px;
    bottom: 0;
    height: 2px;
    background-color: #76b9ed;
}
.apps .current {
    background-color: #4b6570;
}
.apps .current::after {
    left: 0;
    right: 0;
}
.tray {
    margin-left: auto;
    display: flex;
    align-items: center;
}
.battery {
    width: 41px;
    height: 17px;
    line-height: 15px;
    text-align: center;
    background-color: #22ab4b;
    border: 1px solid #fff;
}
.plug {
    width: 10px;
    height: 16px;
    margin: 0 52px 0 6px;
}
.weather {
    gap: 6px;
    margin-right: 7px;
    font-size: 12px;
}
.weather svg {
    width: 20px;
    height: 20px;
}
.icon {
    width: 20px;
}
.icon svg, .notes svg {
    width: 16px;
    height: 16px;
}
.lang {
    width: 30px;
    font-size: 10px;
}
.clock {
    width: 62px;
    font-family: Roboto, sans-serif;
    font-size: 10px;
    line-height: 15px;
}
.notes {
    width: 44px;
    padding-right: 10px;
}
```
